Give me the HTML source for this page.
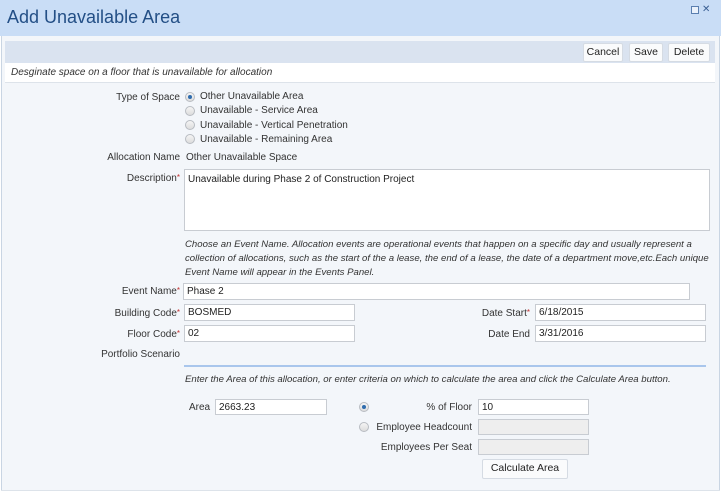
<!DOCTYPE html>
<html><head><meta charset="utf-8"><style>
*{margin:0;padding:0;box-sizing:border-box}
body{width:721px;height:498px;overflow:hidden;background:#fff;font-family:"Liberation Sans",sans-serif;font-size:10px;color:#333;position:relative}
.a{position:absolute;white-space:nowrap}
.r{text-align:right}
.in{position:absolute;background:#fff;border:1px solid #c8ccd2;height:17px;padding:2px 3px;font-size:10px;color:#222;white-space:nowrap}
.gr{background:#eeeeee}
.btn{position:absolute;background:#fafbfc;border:1px solid #d5dbe3;border-radius:2px;height:19px;font-size:10.5px;text-align:center;line-height:17px;color:#222}
.rad{position:absolute;width:10px;height:10px;border-radius:50%;border:1px solid #b8bcc2;background:linear-gradient(#f4f4f4,#dcdcdc)}
.rad.on::after{content:"";position:absolute;left:2px;top:2px;width:4px;height:4px;border-radius:50%;background:#2f6cae}
.it{font-style:italic}
.st{color:#c03030;font-size:8px;vertical-align:top}
</style></head><body>
<div class="a" style="left:0;top:0;width:721px;height:36px;background:#c9ddf6"></div>
<div class="a" style="left:7px;top:7px;font-size:18px;color:#234f86">Add Unavailable Area</div>
<div class="a" style="left:691px;top:6px;width:8px;height:8px;border:1px solid #5a7fb0;background:#eaf1fb"></div>
<div class="a" style="left:702px;top:4px;font-size:10px;color:#3a5f93">✕</div>
<div class="a" style="left:1px;top:36px;width:719px;height:462px;background:#f3f6fa;border-left:1px solid #c9d5e3;border-right:1px solid #c9d5e3"></div>
<div class="a" style="left:5px;top:41px;width:710px;height:22px;background:#dae3f0"></div>
<div class="btn" style="left:583px;top:43px;width:40px">Cancel</div>
<div class="btn" style="left:629px;top:43px;width:34px">Save</div>
<div class="btn" style="left:668px;top:43px;width:42px">Delete</div>
<div class="a" style="left:5px;top:63px;width:710px;height:20px;background:#fff;border-bottom:1px solid #dde3ea"></div>
<div class="a it" style="left:11px;top:67px">Desginate space on a floor that is unavailable for allocation</div>

<div class="a r" style="left:60px;width:120px;top:92px">Type of Space</div>
<div class="rad on" style="left:185px;top:92px"></div><div class="a" style="left:200px;top:91px">Other Unavailable Area</div>
<div class="rad" style="left:185px;top:106px"></div><div class="a" style="left:200px;top:105px">Unavailable - Service Area</div>
<div class="rad" style="left:185px;top:120px"></div><div class="a" style="left:200px;top:120px">Unavailable - Vertical Penetration</div>
<div class="rad" style="left:185px;top:134px"></div><div class="a" style="left:200px;top:134px">Unavailable - Remaining Area</div>
<div class="a r" style="left:60px;width:120px;top:152px">Allocation Name</div>
<div class="a" style="left:186px;top:152px">Other Unavailable Space</div>
<div class="a r" style="left:60px;width:120px;top:173px">Description<span class="st">*</span></div>
<div class="in" style="left:184px;top:169px;width:526px;height:62px;padding-top:4px">Unavailable during Phase 2 of Construction Project</div>
<div class="a it" style="left:185px;top:238px;line-height:14px;font-size:9.6px">Choose an Event Name. Allocation events are operational events that happen on a specific day and usually represent a<br>collection of allocations, such as the start of the a lease, the end of a lease, the date of a department move,etc.Each unique<br>Event Name will appear in the Events Panel.</div>
<div class="a r" style="left:60px;width:120px;top:286px">Event Name<span class="st">*</span></div>
<div class="in" style="left:183px;top:283px;width:507px">Phase 2</div>
<div class="a r" style="left:60px;width:120px;top:308px">Building Code<span class="st">*</span></div>
<div class="in" style="left:184px;top:304px;width:171px">BOSMED</div>
<div class="a r" style="left:410px;width:120px;top:308px">Date Start<span class="st">*</span></div>
<div class="in" style="left:535px;top:304px;width:171px">6/18/2015</div>
<div class="a r" style="left:60px;width:120px;top:329px">Floor Code<span class="st">*</span></div>
<div class="in" style="left:184px;top:325px;width:171px">02</div>
<div class="a r" style="left:410px;width:120px;top:329px">Date End</div>
<div class="in" style="left:535px;top:325px;width:171px">3/31/2016</div>
<div class="a r" style="left:60px;width:120px;top:349px">Portfolio Scenario</div>
<div class="a" style="left:184px;top:365px;width:522px;height:2px;background:#a9c6ec"></div>
<div class="a it" style="left:185px;top:374px;font-size:9.6px">Enter the Area of this allocation, or enter criteria on which to calculate the area and click the Calculate Area button.</div>
<div class="a" style="left:189px;top:402px">Area</div>
<div class="in" style="left:215px;top:399px;width:112px;height:16px">2663.23</div>
<div class="rad on" style="left:359px;top:402px"></div>
<div class="a r" style="left:372px;width:100px;top:402px">% of Floor</div>
<div class="in" style="left:478px;top:399px;width:111px;height:16px">10</div>
<div class="rad" style="left:359px;top:422px"></div>
<div class="a r" style="left:372px;width:100px;top:422px">Employee Headcount</div>
<div class="in gr" style="left:478px;top:419px;width:111px;height:16px"></div>
<div class="a r" style="left:372px;width:100px;top:442px">Employees Per Seat</div>
<div class="in gr" style="left:478px;top:439px;width:111px;height:16px"></div>
<div class="btn" style="left:482px;top:459px;width:86px;height:20px">Calculate Area</div>
<div class="a" style="left:1px;top:490px;width:719px;height:8px;background:#fff;border-top:1px solid #dde3ea"></div>
</body></html>
